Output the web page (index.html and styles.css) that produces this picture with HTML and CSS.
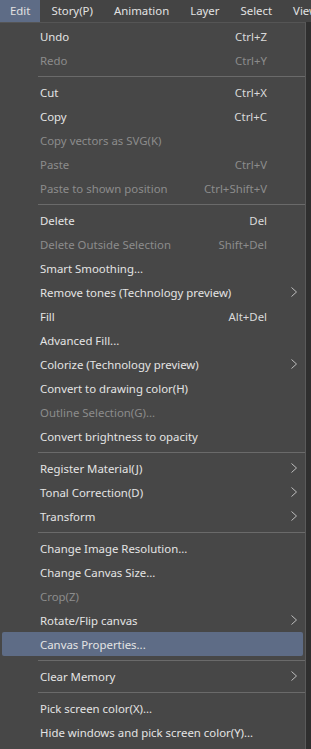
FILE: index.html
```html
<!DOCTYPE html>
<html lang="en">
<head>
  <meta charset="UTF-8">
  <meta name="viewport" content="width=device-width, initial-scale=1.0">
  <title>Edit menu</title>
  <link rel="stylesheet" href="styles.css">
</head>
<body>
  <nav class="menubar">
    <span class="menubar-item active">Edit</span>
    <span class="menubar-item">Story(P)</span>
    <span class="menubar-item">Animation</span>
    <span class="menubar-item">Layer</span>
    <span class="menubar-item">Select</span>
    <span class="menubar-item">View</span>
  </nav>

  <div class="menu">
    <div class="item"><span>Undo</span><span class="key">Ctrl+Z</span><span></span></div>
    <div class="item off"><span>Redo</span><span class="key">Ctrl+Y</span><span></span></div>
    <div class="sep"></div>

    <div class="item"><span>Cut</span><span class="key">Ctrl+X</span><span></span></div>
    <div class="item"><span>Copy</span><span class="key">Ctrl+C</span><span></span></div>
    <div class="item off"><span>Copy vectors as SVG(K)</span><span class="key"></span><span></span></div>
    <div class="item off"><span>Paste</span><span class="key">Ctrl+V</span><span></span></div>
    <div class="item off"><span>Paste to shown position</span><span class="key">Ctrl+Shift+V</span><span></span></div>
    <div class="sep"></div>

    <div class="item"><span>Delete</span><span class="key">Del</span><span></span></div>
    <div class="item off"><span>Delete Outside Selection</span><span class="key">Shift+Del</span><span></span></div>
    <div class="item"><span>Smart Smoothing...</span><span class="key"></span><span></span></div>
    <div class="item"><span>Remove tones (Technology preview)</span><span class="key"></span><svg class="arrow" viewBox="0 0 6 10"><polyline points="0.5,0.5 5.5,5 0.5,9.5"/></svg></div>
    <div class="item"><span>Fill</span><span class="key">Alt+Del</span><span></span></div>
    <div class="item"><span>Advanced Fill...</span><span class="key"></span><span></span></div>
    <div class="item"><span>Colorize (Technology preview)</span><span class="key"></span><svg class="arrow" viewBox="0 0 6 10"><polyline points="0.5,0.5 5.5,5 0.5,9.5"/></svg></div>
    <div class="item"><span>Convert to drawing color(H)</span><span class="key"></span><span></span></div>
    <div class="item off"><span>Outline Selection(G)...</span><span class="key"></span><span></span></div>
    <div class="item"><span>Convert brightness to opacity</span><span class="key"></span><span></span></div>
    <div class="sep"></div>

    <div class="item"><span>Register Material(J)</span><span class="key"></span><svg class="arrow" viewBox="0 0 6 10"><polyline points="0.5,0.5 5.5,5 0.5,9.5"/></svg></div>
    <div class="item"><span>Tonal Correction(D)</span><span class="key"></span><svg class="arrow" viewBox="0 0 6 10"><polyline points="0.5,0.5 5.5,5 0.5,9.5"/></svg></div>
    <div class="item"><span>Transform</span><span class="key"></span><svg class="arrow" viewBox="0 0 6 10"><polyline points="0.5,0.5 5.5,5 0.5,9.5"/></svg></div>
    <div class="sep"></div>

    <div class="item"><span>Change Image Resolution...</span><span class="key"></span><span></span></div>
    <div class="item"><span>Change Canvas Size...</span><span class="key"></span><span></span></div>
    <div class="item off"><span>Crop(Z)</span><span class="key"></span><span></span></div>
    <div class="item"><span>Rotate/Flip canvas</span><span class="key"></span><svg class="arrow" viewBox="0 0 6 10"><polyline points="0.5,0.5 5.5,5 0.5,9.5"/></svg></div>
    <div class="item hover"><span>Canvas Properties...</span><span class="key"></span><span></span></div>
    <div class="sep"></div>

    <div class="item"><span>Clear Memory</span><span class="key"></span><svg class="arrow" viewBox="0 0 6 10"><polyline points="0.5,0.5 5.5,5 0.5,9.5"/></svg></div>
    <div class="sep"></div>

    <div class="item"><span>Pick screen color(X)...</span><span class="key"></span><span></span></div>
    <div class="item"><span>Hide windows and pick screen color(Y)...</span><span class="key"></span><span></span></div>
  </div>
</body>
</html>
```

FILE: styles.css
```css
body {
  margin: 0;
  padding: 0;
  background-color: #2f2f2f;
  font-family: "Noto Sans", "Open Sans", sans-serif;
  font-size: 11.4px;
  color: #e4e4e4;
  width: 311px;
  height: 749px;
  overflow: hidden;
}
.menubar {
  display: flex;
  height: 22px;
  background-color: #444444;
  white-space: nowrap;
  overflow: hidden;
}
.menubar-item {
  line-height: 22px;
  padding: 0 10px;
  margin-right: 1px;
  color: #e2e2e2;
}
.menubar-item.active {
  background-color: #5e6c86;
}
.menu {
  width: 306px;
  height: 727px;
  box-sizing: border-box;
  padding-top: 1px;
  background-color: #474747;
  border-top: 1px solid #555555;
  border-right: 1px solid #5a5a5a;
}
.item {
  display: grid;
  grid-template-columns: 1fr auto 36px;
  align-items: center;
  height: 24px;
  margin: 0 2px;
  padding-left: 38px;
  border-radius: 2px;
  white-space: nowrap;
}
.item .key {
  color: #dadada;
}
.item.off,
.item.off .key {
  color: #8c8c8c;
}
.item.hover {
  background-color: #5e6c86;
}
.arrow {
  justify-self: end;
  width: 6px;
  height: 10px;
  margin-right: 6px;
  fill: none;
  stroke: #bdbdbd;
  stroke-width: 1;
}
.sep {
  height: 8px;
  display: flex;
  align-items: center;
  padding-left: 38px;
}
.sep::after {
  content: "";
  flex: 1;
  height: 1px;
  background-color: #6a6a6a;
}
```
